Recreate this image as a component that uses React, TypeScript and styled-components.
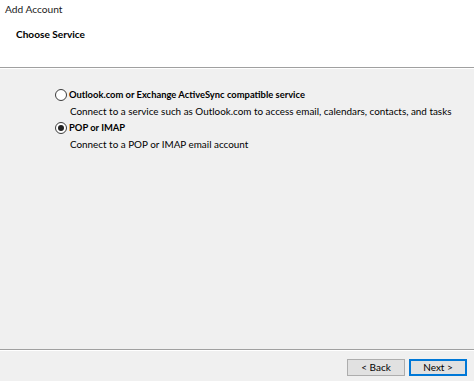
import React, { useState } from 'react';
import styled, { createGlobalStyle } from 'styled-components';

const GlobalStyle = createGlobalStyle`
  html, body {
    margin: 0;
    padding: 0;
    background: #f0f0f0;
  }
  body {
    font-family: Lato, "Noto Sans", sans-serif;
    font-size: 10px;
    color: #000;
  }
`;

const Dialog = styled.div`
  width: 474px;
  height: 381px;
  display: flex;
  flex-direction: column;
  background: #f0f0f0;
  overflow: hidden;
`;

const Header = styled.div`
  height: 68px;
  flex: none;
  box-sizing: border-box;
  background: #fff;
  border-bottom: 1px solid #a0a0a0;
  display: flex;
  flex-direction: column;
`;

const WindowTitle = styled.div`
  padding: 2px 0 0 5px;
  line-height: 14px;
  font-size: 10.2px;
  color: #1a1a1a;
`;

const StepTitle = styled.div`
  margin: 11px 0 0 16px;
  font-weight: 700;
  font-size: 10.1px;
  line-height: 14px;
`;

const Body = styled.div`
  flex: 1;
  border-top: 1px solid #fff;
  padding: 19px 0 0 55px;
  display: flex;
  flex-direction: column;
  gap: 3px;
`;

const Option = styled.label`
  display: grid;
  grid-template-columns: 14px 1fr;
  row-gap: 4px;
  align-items: center;
  cursor: default;
`;

const RadioCircle = styled.span<{ checked?: boolean }>`
  width: 12px;
  height: 12px;
  box-sizing: border-box;
  border-radius: 50%;
  border: 1px solid #3c3c3c;
  background: #fff;
  display: flex;
  align-items: center;
  justify-content: center;

  &::after {
    content: '';
    width: 6px;
    height: 6px;
    border-radius: 50%;
    background: ${p => (p.checked ? '#222' : 'transparent')};
  }
`;

const OptionTitle = styled.span`
  font-weight: 700;
  font-size: 9.4px;
  line-height: 13px;
`;

const OptionDesc = styled.span`
  grid-column: 2;
  font-size: 9.9px;
  line-height: 13px;
  padding-left: 1px;
`;

const Footer = styled.div`
  height: 32px;
  flex: none;
  box-sizing: border-box;
  border-top: 1px solid #a0a0a0;
  box-shadow: inset 0 1px 0 #ffffff;
  display: flex;
  justify-content: flex-end;
  align-items: flex-start;
  gap: 4px;
  padding: 9px 7px 0 0;
`;

const Button = styled.button<{ primary?: boolean }>`
  width: 58px;
  height: 17px;
  box-sizing: border-box;
  font-family: Lato, "Noto Sans", sans-serif;
  font-size: 10px;
  line-height: 13px;
  padding: 0;
  color: #000;
  background: #e1e1e1;
  border: 1px solid ${p => (p.primary ? '#0078d7' : '#adadad')};
  box-shadow: ${p => (p.primary ? 'inset 0 0 0 1px #0078d7' : 'none')};
  cursor: default;
`;

const options = [
  {
    id: 'eas',
    title: 'Outlook.com or Exchange ActiveSync compatible service',
    desc: 'Connect to a service such as Outlook.com to access email, calendars, contacts, and tasks',
  },
  {
    id: 'pop',
    title: 'POP or IMAP',
    desc: 'Connect to a POP or IMAP email account',
  },
];

export default function App() {
  const [selected, setSelected] = useState('pop');

  return (
    <>
      <GlobalStyle />
      <Dialog>
        <Header>
          <WindowTitle>Add Account</WindowTitle>
          <StepTitle>Choose Service</StepTitle>
        </Header>
        <Body>
          {options.map(o => (
            <Option key={o.id} onClick={() => setSelected(o.id)}>
              <RadioCircle checked={selected === o.id} />
              <OptionTitle>{o.title}</OptionTitle>
              <OptionDesc>{o.desc}</OptionDesc>
            </Option>
          ))}
        </Body>
        <Footer>
          <Button>&lt; Back</Button>
          <Button primary>Next &gt;</Button>
        </Footer>
      </Dialog>
    </>
  );
}
